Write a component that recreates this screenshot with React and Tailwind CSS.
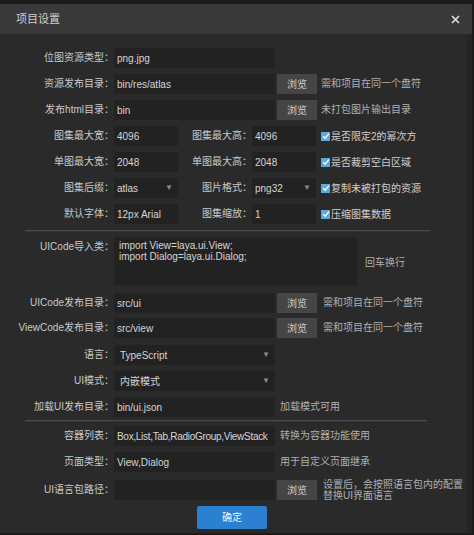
import React from "react";

const FONT = { fontFamily: '"Liberation Sans","Noto Sans CJK SC",sans-serif' };

function Label({ children, w = "w-[114px]" }) {
  return (
    <div className={`${w} shrink-0 text-right text-[10px] text-[#c9c9c9] leading-none whitespace-nowrap`}>
      {children}
    </div>
  );
}

function Input({ value, w = "w-[161px]", select, cls = "" }) {
  return (
    <div className={`${w} h-5 shrink-0 bg-[#222222] flex items-center pl-[3px] pr-[5px] text-[10px] text-[#d6d6d6] overflow-hidden whitespace-nowrap ${cls}`}>
      <span className="flex-1 overflow-hidden">{value}</span>
      {select && <span className="text-[8px] text-[#8a8a8a]">▼</span>}
    </div>
  );
}

function Browse() {
  return (
    <div className="w-10 h-5 ml-[2px] shrink-0 bg-[#454545] flex items-center justify-center text-[10px] text-[#cfcfcf]">
      浏览
    </div>
  );
}

function Hint({ children, cls = "ml-[4px]" }) {
  return <div className={`${cls} text-[10px] text-[#b0b0b0] whitespace-nowrap leading-none`}>{children}</div>;
}

function Check({ children }) {
  return (
    <div className="ml-[5px] flex items-center text-[10px] text-[#d0d0d0] whitespace-nowrap">
      <div className="w-[9px] h-[9px] bg-[#5aa9dc] flex items-center justify-center mr-[1px]">
        <svg width="8" height="8" viewBox="0 0 8 8">
          <path d="M1.2 4.2 L3.2 6.2 L6.9 1.6" stroke="#ffffff" strokeWidth="1.4" fill="none" />
        </svg>
      </div>
      {children}
    </div>
  );
}

function Row({ children, cls = "" }) {
  return <div className={`flex items-center h-5 ${cls}`}>{children}</div>;
}

export default function App() {
  return (
    <div style={FONT} className="w-[474px] h-[535px] bg-[#1b1b1b] pt-[4px] overflow-hidden">
      <div className="w-[472px] h-[529px] flex flex-col">
        <div className="h-[30px] bg-[#393939] flex items-center justify-between pl-4 pr-[12px] shrink-0">
          <span className="text-[11px] text-[#d0d0d0]">项目设置</span>
          <svg width="9" height="9" viewBox="0 0 9 9">
            <path d="M1 1 L8 8 M8 1 L1 8" stroke="#e0e0e0" strokeWidth="1.6" />
          </svg>
        </div>
        <div className="flex-1 flex bg-[#2a2a2a]">
          <div className="flex-1 flex flex-col pt-[14px]">
            <Row>
              <Label>位图资源类型：</Label>
              <Input value="png.jpg" />
            </Row>
            <Row cls="mt-[6px]">
              <Label>资源发布目录：</Label>
              <Input value="bin/res/atlas" />
              <Browse />
              <Hint>需和项目在同一个盘符</Hint>
            </Row>
            <Row cls="mt-[6px]">
              <Label>发布html目录：</Label>
              <Input value="bin" />
              <Browse />
              <Hint>未打包图片输出目录</Hint>
            </Row>
            <Row cls="mt-[6px]">
              <Label>图集最大宽：</Label>
              <Input value="4096" w="w-[64px]" />
              <Label w="w-[74px]">图集最大高：</Label>
              <Input value="4096" w="w-[64px]" />
              <Check>是否限定2的幂次方</Check>
            </Row>
            <Row cls="mt-[6px]">
              <Label>单图最大宽：</Label>
              <Input value="2048" w="w-[64px]" />
              <Label w="w-[74px]">单图最大高：</Label>
              <Input value="2048" w="w-[64px]" />
              <Check>是否裁剪空白区域</Check>
            </Row>
            <Row cls="mt-[6px]">
              <Label>图集后缀：</Label>
              <Input value="atlas" w="w-[64px]" select />
              <Label w="w-[74px]">图片格式：</Label>
              <Input value="png32" w="w-[64px]" select />
              <Check>复制未被打包的资源</Check>
            </Row>
            <Row cls="mt-[6px]">
              <Label>默认字体：</Label>
              <Input value="12px Arial" w="w-[64px]" />
              <Label w="w-[74px]">图集缩放：</Label>
              <Input value="1" w="w-[64px]" />
              <Check>压缩图集数据</Check>
            </Row>
            <div className="mt-[6px] ml-[25px] w-[405px] h-[2px] bg-[#4a4a4a] border-b border-[#333]" />
            <div className="flex mt-[5px]">
              <Label>
                <div className="pt-[5px]">UICode导入类：</div>
              </Label>
              <div className="w-[243px] h-[48px] bg-[#222222] pl-[5px] pt-[3px] text-[10px] leading-[11px] text-[#d6d6d6] whitespace-nowrap overflow-hidden">
                <div>import View=laya.ui.View;</div>
                <div>import Dialog=laya.ui.Dialog;</div>
              </div>
              <div className="ml-[8px] flex items-center">
                <Hint cls="mt-[4px]">回车换行</Hint>
              </div>
            </div>
            <Row cls="mt-[8px]">
              <Label>UICode发布目录：</Label>
              <Input value="src/ui" />
              <Browse />
              <Hint cls="ml-[6px]">需和项目在同一个盘符</Hint>
            </Row>
            <Row cls="mt-[5px]">
              <Label>ViewCode发布目录：</Label>
              <Input value="src/view" />
              <Browse />
              <Hint cls="ml-[6px]">需和项目在同一个盘符</Hint>
            </Row>
            <Row cls="mt-[7px]">
              <Label>语言：</Label>
              <Input value={<span className="pl-[3px]">TypeScript</span>} select />
            </Row>
            <Row cls="mt-[6px]">
              <Label>UI模式：</Label>
              <Input value={<span className="pl-[3px]">内嵌模式</span>} select />
            </Row>
            <Row cls="mt-[6px]">
              <Label>加载UI发布目录：</Label>
              <Input value="bin/ui.json" />
              <Hint cls="ml-[5px]">加载模式可用</Hint>
            </Row>
            <div className="mt-[3px] ml-[25px] w-[402px] h-[2px] bg-[#4a4a4a] border-b border-[#333]" />
            <Row cls="mt-[4px]">
              <Label>容器列表：</Label>
              <Input value="Box,List,Tab,RadioGroup,ViewStack" cls="tracking-[-0.3px] pr-0" />
              <Hint cls="ml-[5px]">转换为容器功能使用</Hint>
            </Row>
            <Row cls="mt-[6px]">
              <Label>页面类型：</Label>
              <Input value="View,Dialog" />
              <Hint cls="ml-[5px]">用于自定义页面继承</Hint>
            </Row>
            <Row cls="mt-[8px]">
              <Label>UI语言包路径：</Label>
              <Input value="" />
              <Browse />
              <div className="ml-[6px] text-[10px] leading-[11px] text-[#b0b0b0] whitespace-nowrap">
                <div>设置后，会按照语言包内的配置</div>
                <div>替换UI界面语言</div>
              </div>
            </Row>
            <div className="mt-[6px] flex justify-center">
              <div className="ml-[-3px] w-[70px] h-[23px] bg-[#2c80d2] rounded-[2px] flex items-center justify-center text-[10px] text-[#eef4ff]">
                确定
              </div>
            </div>
          </div>
          <div className="w-[5px] bg-[#252525]" />
        </div>
      </div>
    </div>
  );
}
